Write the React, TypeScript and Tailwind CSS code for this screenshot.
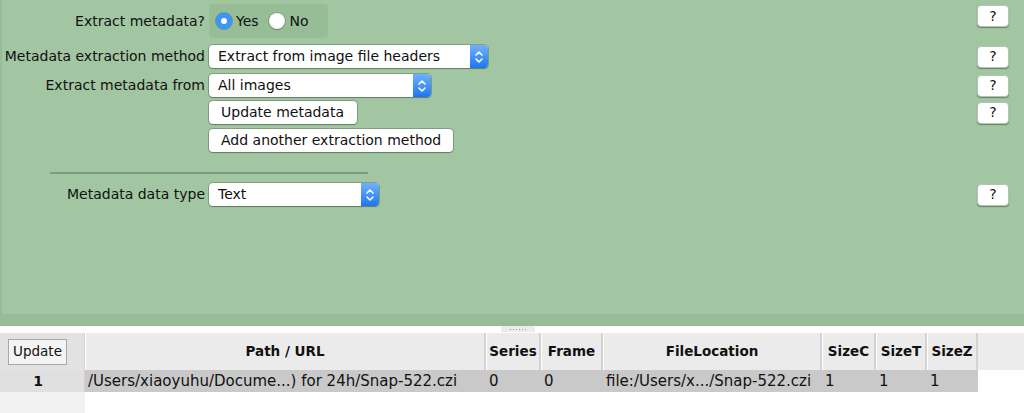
import React from "react";

const font = { fontFamily: '"DejaVu Sans", "Liberation Sans", sans-serif' };

function Help({ className = "" }: { className?: string }) {
  return (
    <div
      className={`w-[32px] h-[22px] bg-white rounded-[4px] border border-[#b4c4b4] shadow-[0_1px_1px_rgba(0,0,0,0.35)] flex items-center justify-center text-[14px] text-[#111] ${className}`}
    >
      ?
    </div>
  );
}

function Chevrons() {
  return (
    <svg width="10" height="14" viewBox="0 0 10 14" fill="none">
      <path d="M2 5 L5 2 L8 5" stroke="white" strokeWidth="1.6" strokeLinecap="round" strokeLinejoin="round" />
      <path d="M2 9 L5 12 L8 9" stroke="white" strokeWidth="1.6" strokeLinecap="round" strokeLinejoin="round" />
    </svg>
  );
}

function Select({ text, width }: { text: string; width: string }) {
  return (
    <div
      className={`${width} h-[23px] bg-white rounded-[4px] shadow-[0_0_0_1px_rgba(90,110,90,0.45),0_1px_1px_rgba(0,0,0,0.3)] flex items-stretch`}
    >
      <div className="flex-1 flex items-center pl-[9px] text-[14px] text-[#111] whitespace-nowrap">{text}</div>
      <div className="w-[18px] rounded-r-[4px] bg-gradient-to-b from-[#6fb1fb] to-[#1a75f2] flex items-center justify-center">
        <Chevrons />
      </div>
    </div>
  );
}

function Button({ text }: { text: string }) {
  return (
    <div className="h-[23px] bg-white rounded-[4px] shadow-[0_0_0_1px_rgba(90,110,90,0.45),0_1px_1px_rgba(0,0,0,0.3)] flex items-center px-[12px] text-[14px] text-[#111] whitespace-nowrap">
      {text}
    </div>
  );
}

function Label({ text }: { text: string }) {
  return (
    <div className="w-[204px] shrink-0 text-right text-[14px] text-[#111] whitespace-nowrap pr-[1px]">{text}</div>
  );
}

const cols = [
  { name: "Path / URL", w: "w-[401px]", v: "/Users/xiaoyuhu/Docume...) for 24h/Snap-522.czi" },
  { name: "Series", w: "w-[55px]", v: "0" },
  { name: "Frame", w: "w-[62px]", v: "0" },
  { name: "FileLocation", w: "w-[219px]", v: "file:/Users/x.../Snap-522.czi" },
  { name: "SizeC", w: "w-[54px]", v: "1" },
  { name: "SizeT", w: "w-[51px]", v: "1" },
  { name: "SizeZ", w: "w-[51px]", v: "1" },
];

export default function App() {
  return (
    <div className="w-[1024px] h-[413px] overflow-hidden bg-white flex flex-col" style={font}>
      {/* green settings panel */}
      <div className="h-[326px] bg-[#98bc98] pl-[2px] pb-[12px] flex">
        <div className="flex-1 bg-[#a1c6a1] flex flex-col pt-[4px] pr-[15px]">
          {/* row 1 */}
          <div className="flex items-start">
            <div className="h-[34px] flex items-center">
              <Label text="Extract metadata?" />
            </div>
            <div className="ml-[3px] w-[119px] h-[34px] rounded-[4px] bg-[#97bd97] flex items-center pl-[7px] text-[14px] text-[#111]">
              <div className="w-[16px] h-[16px] rounded-full bg-[#3c95f7] flex items-center justify-center shadow-[0_0_0_1px_rgba(40,110,220,0.5)]">
                <div className="w-[6px] h-[6px] rounded-full bg-white" />
              </div>
              <span className="ml-[4px]">Yes</span>
              <div className="ml-[10px] w-[16px] h-[16px] rounded-full bg-white shadow-[0_0_0_1px_rgba(90,110,90,0.4),0_1px_1px_rgba(0,0,0,0.25)]" />
              <span className="ml-[5px]">No</span>
            </div>
            <div className="flex-1" />
            <Help className="mt-[1px]" />
          </div>
          {/* row 2 */}
          <div className="flex items-center mt-[7px]">
            <Label text="Metadata extraction method" />
            <div className="ml-[3px]">
              <Select text="Extract from image file headers" width="w-[279px]" />
            </div>
            <div className="flex-1" />
            <Help />
          </div>
          {/* row 3 */}
          <div className="flex items-center mt-[6px]">
            <Label text="Extract metadata from" />
            <div className="ml-[3px]">
              <Select text="All images" width="w-[222px]" />
            </div>
            <div className="flex-1" />
            <Help />
          </div>
          {/* row 4 */}
          <div className="flex items-center mt-[4px]">
            <div className="w-[204px] shrink-0" />
            <div className="ml-[3px] w-[148px]">
              <Button text="Update metadata" />
            </div>
            <div className="flex-1" />
            <Help />
          </div>
          {/* row 5 */}
          <div className="flex items-center mt-[5px]">
            <div className="w-[204px] shrink-0" />
            <div className="ml-[3px]">
              <Button text="Add another extraction method" />
            </div>
          </div>
          {/* divider */}
          <div className="ml-[48px] mt-[20px] w-[318px] h-[2px] bg-[#7d9e7d]" />
          {/* row 6 */}
          <div className="flex items-center mt-[9px]">
            <Label text="Metadata data type" />
            <div className="ml-[3px]">
              <Select text="Text" width="w-[170px]" />
            </div>
            <div className="flex-1" />
            <Help />
          </div>
        </div>
      </div>

      {/* splitter */}
      <div className="h-[7px] bg-white flex justify-center">
        <div className="ml-[12px] w-[34px] h-[6px] bg-[#ececec] flex items-center justify-center gap-[2px]">
          {[0, 1, 2, 3, 4, 5].map((i) => (
            <div key={i} className="w-[1px] h-[1px] bg-[#999]" />
          ))}
        </div>
      </div>

      {/* table */}
      <div className="flex-1 flex flex-col text-[#111]">
        {/* header */}
        <div className="h-[37px] flex bg-[#ececec]">
          <div className="w-[85px] shrink-0 bg-[#e2e2e2] flex items-center pl-[8px] border-r border-[#d0d0d0]">
            <div className="h-[26px] w-[59px] bg-[#f4f4f4] border border-[#a8a8a8] flex items-center justify-center text-[13.5px]">
              Update
            </div>
          </div>
          {cols.map((c) => (
            <div
              key={c.name}
              className={`${c.w} shrink-0 bg-[#ebebeb] border-r-2 border-[#d2d2d2] border-l border-l-white flex items-center justify-center font-bold text-[13.5px] whitespace-nowrap`}
            >
              {c.name}
            </div>
          ))}
          <div className="flex-1 bg-[#ececec]" />
        </div>
        {/* row 1 */}
        <div className="h-[22px] flex text-[15px]">
          <div className="w-[85px] shrink-0 bg-[#e0e0e0] border-r border-[#d0d0d0] flex items-center justify-center pr-[8px] font-bold text-[14px]">
            1
          </div>
          {cols.map((c) => (
            <div
              key={c.name}
              className={`${c.w} shrink-0 bg-[#c9c9c9] flex items-center pl-[3px] whitespace-nowrap overflow-hidden`}
            >
              {c.v}
            </div>
          ))}
          <div className="flex-1 bg-white" />
        </div>
        {/* empty area */}
        <div className="flex-1 flex">
          <div className="w-[85px] shrink-0 bg-[#f2f2f2]" />
          <div className="flex-1 bg-white" />
        </div>
      </div>
    </div>
  );
}
